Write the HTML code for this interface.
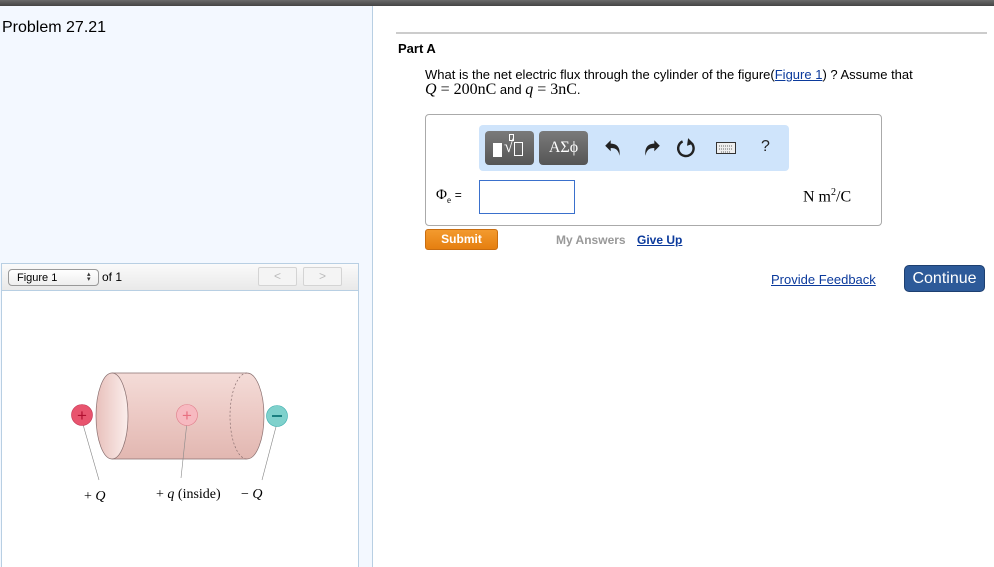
<!DOCTYPE html>
<html><head><meta charset="utf-8">
<style>
*{margin:0;padding:0;box-sizing:border-box}
body{width:994px;height:567px;overflow:hidden;background:#fff;font-family:"Liberation Sans",Arial,sans-serif;position:relative;color:#000}
.topbar{position:absolute;left:0;top:0;width:994px;height:6px;background:linear-gradient(#6a6a6a,#444)}
.left{position:absolute;left:0;top:6px;width:373px;height:561px;background:#f3f8ff;border-right:1px solid #b8cfe3}
.abs{position:absolute}
.serif{font-family:"Liberation Serif","DejaVu Serif",serif}
a{color:#0b3a9c;text-decoration:underline}
</style></head><body>
<div class="topbar"></div>
<div class="left">
  <div class="abs" style="left:2px;top:13px;font-size:16px">Problem 27.21</div>
  <div class="abs" style="left:1px;top:257px;width:358px;height:304px;border:1px solid #b8cfe3;border-bottom:none;background:#fff">
    <div style="height:27px;background:linear-gradient(#fafafa,#e9e9e9);border-bottom:1px solid #b8cfe3;position:relative">
      <div class="abs" style="left:6px;top:5px;width:91px;height:17px;border:1px solid #999;border-radius:4px;background:linear-gradient(#fff,#eee);font-size:11px;padding:2px 0 0 8px">Figure 1</div>
      <div class="abs" style="left:85px;top:8px;font-size:7px;line-height:5px;color:#333">▴<br>▾</div>
      <div class="abs" style="left:100px;top:6px;font-size:12px">of 1</div>
      <div class="abs" style="left:256px;top:3px;width:39px;height:19px;border:1px solid #d4d4d4;border-radius:2px;background:#f4f4f4;color:#bbb;text-align:center;font-size:12px;line-height:17px">&lt;</div>
      <div class="abs" style="left:301px;top:3px;width:39px;height:19px;border:1px solid #d4d4d4;border-radius:2px;background:#f4f4f4;color:#bbb;text-align:center;font-size:12px;line-height:17px">&gt;</div>
    </div>
  </div>
  <svg class="abs" style="left:60px;top:354px" width="240" height="150" viewBox="0 0 240 150">
    <defs>
      <linearGradient id="cyl" x1="0" y1="0" x2="0" y2="1"><stop offset="0" stop-color="#f4dcd8"/><stop offset="0.5" stop-color="#ecc9c4"/><stop offset="1" stop-color="#e2b7b1"/></linearGradient>
      <linearGradient id="cap" x1="0" y1="0" x2="1" y2="0"><stop offset="0" stop-color="#e8c0bb"/><stop offset="1" stop-color="#fbeeec"/></linearGradient>
    </defs>
    <path d="M52 13 L187 13 A17 43 0 0 1 187 99 L52 99 Z" fill="url(#cyl)" stroke="#8a7070" stroke-width="0.7"/>
    <ellipse cx="52" cy="56" rx="16" ry="43" fill="url(#cap)" stroke="#8a7070" stroke-width="0.7"/>
    <path d="M187 13 A17 43 0 0 0 187 99" fill="none" stroke="#8a7070" stroke-width="0.7" stroke-dasharray="2,2"/>
    <line x1="22" y1="61" x2="39" y2="120" stroke="#888" stroke-width="0.6"/>
    <line x1="127" y1="62" x2="121" y2="118" stroke="#888" stroke-width="0.6"/>
    <line x1="217" y1="63" x2="202" y2="120" stroke="#888" stroke-width="0.6"/>
    <circle cx="22" cy="55" r="10.5" fill="#e8546e" stroke="#c03050" stroke-width="0.6"/>
    <text x="22" y="61" font-size="17" text-anchor="middle" fill="#b01030" font-family="Liberation Sans">+</text>
    <circle cx="127" cy="55" r="10.5" fill="#f7b9c0" stroke="#e07a88" stroke-width="0.6"/>
    <text x="127" y="61" font-size="17" text-anchor="middle" fill="#e87080" font-family="Liberation Sans">+</text>
    <circle cx="217" cy="56" r="10.5" fill="#7fd1cc" stroke="#3aa" stroke-width="0.6"/>
    <rect x="212" y="55" width="10" height="2" fill="#1a8080"/>
    <text x="24" y="140" font-size="14" font-family="Liberation Serif">+ <tspan font-style="italic">Q</tspan></text>
    <text x="96" y="138" font-size="14" font-family="Liberation Serif">+ <tspan font-style="italic">q</tspan> (inside)</text>
    <text x="181" y="138" font-size="14" font-family="Liberation Serif">− <tspan font-style="italic">Q</tspan></text>
  </svg>
</div>

<div class="abs" style="left:396px;top:32px;width:591px;height:2px;background:#ccc"></div>
<div class="abs" style="left:398px;top:41px;font-size:13px;font-weight:bold">Part A</div>
<div class="abs" style="left:425px;top:67px;font-size:13px;line-height:15px">What is the net electric flux through the cylinder of the figure(<a>Figure 1</a>) ? Assume that<br><span class="serif" style="font-size:16px"><i>Q</i> = 200nC</span> and <span class="serif" style="font-size:16px"><i>q</i> = 3nC</span>.</div>

<div class="abs" style="left:425px;top:114px;width:457px;height:112px;border:1px solid #aaa;border-radius:4px;background:#fff">
  <div class="abs" style="left:53px;top:10px;width:310px;height:46px;background:#cfe4fb;border-radius:4px">
    <div class="abs" style="left:6px;top:6px;width:49px;height:34px;border-radius:4px;background:linear-gradient(#7a7a7a,#555)">
      <div class="abs" style="left:8px;top:12px;width:9px;height:14px;background:#fff"></div>
      <div class="abs serif" style="left:19px;top:6px;color:#fff;font-size:17px">√</div>
      <div class="abs" style="left:29px;top:11px;width:9px;height:14px;border:1px solid #fff"></div>
      <div class="abs" style="left:24px;top:3px;width:5px;height:7px;border:1px solid #fff"></div>
    </div>
    <div class="abs serif" style="left:60px;top:6px;width:49px;height:34px;border-radius:4px;background:linear-gradient(#7a7a7a,#555);color:#fff;font-size:16px;text-align:center;line-height:33px">ΑΣϕ</div>
    <svg class="abs" style="left:124px;top:12px" width="22" height="22" viewBox="0 0 20 20"><path d="M7 3 L2 8 L7 13 V10 C12 10 14 12 15 17 C16 10 13 6 7 6 Z" fill="#222"/></svg>
    <svg class="abs" style="left:161px;top:12px" width="22" height="22" viewBox="0 0 20 20"><path d="M13 3 L18 8 L13 13 V10 C8 10 6 12 5 17 C4 10 7 6 13 6 Z" fill="#222"/></svg>
    <svg class="abs" style="left:197px;top:12px" width="22" height="22" viewBox="0 0 20 20"><path d="M14.5 6 A7 7 0 1 1 6 4" fill="none" stroke="#222" stroke-width="2.2"/><path d="M11 1 L16 6 L10 8 Z" fill="#222"/></svg>
    <svg class="abs" style="left:236px;top:16px" width="22" height="14" viewBox="0 0 20 14"><rect x="0.5" y="1.5" width="19" height="11" fill="#eee" stroke="#333"/><path d="M3 5h14M3 8h14M5 11h10" stroke="#666" stroke-dasharray="1,1"/></svg>
    <div class="abs" style="left:282px;top:13px;font-size:16px;color:#222">?</div>
  </div>
  <div class="abs serif" style="left:10px;top:72px;font-size:15px">Φ<sub style="font-size:9px">e</sub> <span style="font-family:'Liberation Sans';font-size:12px">=</span></div>
  <div class="abs" style="left:53px;top:65px;width:96px;height:34px;border:1px solid #3a70cc"></div>
  <div class="abs serif" style="left:377px;top:72px;font-size:16px">N m<sup style="font-size:10px">2</sup>/C</div>
</div>
<div class="abs" style="left:425px;top:229px;width:73px;height:21px;border-radius:3px;background:linear-gradient(#f39a2e,#e57f10);border:1px solid #c96d10;color:#fff;font-weight:bold;font-size:12px;text-align:center;line-height:19px">Submit</div>
<div class="abs" style="left:556px;top:233px;font-size:12px;font-weight:bold;color:#999">My Answers</div>
<div class="abs" style="left:637px;top:233px;font-size:12px;font-weight:bold"><a style="color:#0b3a9c">Give Up</a></div>
<div class="abs" style="left:771px;top:272px;font-size:13px"><a>Provide Feedback</a></div>
<div class="abs" style="left:904px;top:265px;width:81px;height:27px;border-radius:5px;background:#2d5a99;border:1px solid #1d3f70;color:#fff;font-size:16px;text-align:center;line-height:25px">Continue</div>
</body></html>
